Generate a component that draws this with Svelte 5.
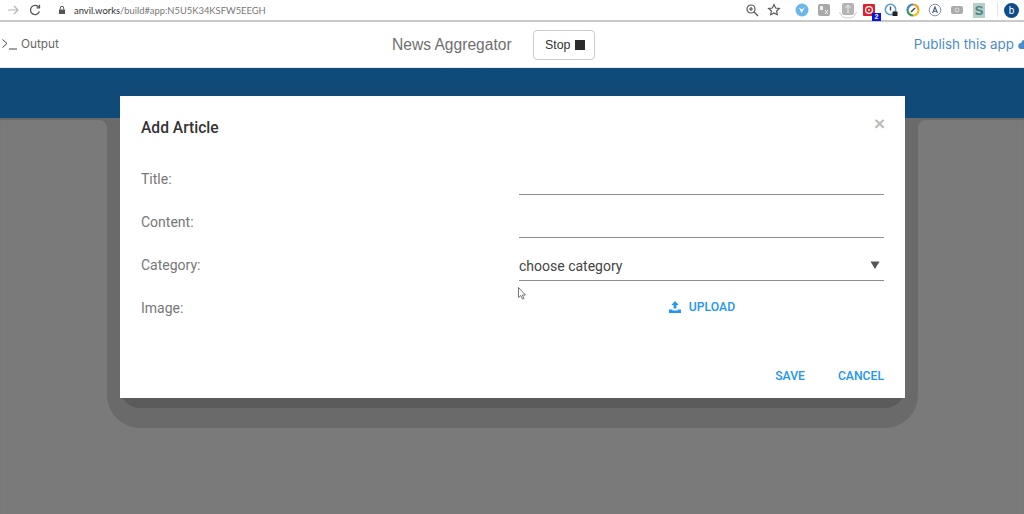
<script>
  const fields = ["Title:", "Content:"];
</script>

<div class="screen">
  <div class="chrome">
    <svg class="nav" width="14" height="14" viewBox="0 0 14 14" fill="none" stroke="#b4b4b4" stroke-width="1.2"><path d="M2 7h10M8 3l4 4-4 4" /></svg>
    <svg class="nav reload" width="14" height="14" viewBox="0 0 14 14" fill="none" stroke="#555" stroke-width="1.3"><path d="M11.4 8.6a4.6 4.6 0 1 1-.6-4.4" /><path d="M11.5 1.8v3h-3" /></svg>
    <svg class="lock" width="10" height="10" viewBox="0 0 10 10"><path d="M2 4.5h6v4.5H2z" fill="#555" /><path d="M3.3 4.5V3a1.7 1.7 0 0 1 3.4 0v1.5" fill="none" stroke="#555" /></svg>
    <span class="url"><b>anvil.works</b>/build#app:N5U5K34KSFW5EEGH</span>

    <div class="exts">
      <svg width="14" height="14" viewBox="0 0 14 14" fill="none" stroke="#555" stroke-width="1.2"><circle cx="6" cy="6" r="4" /><path d="M9 9l4 4M4 6h4M6 4v4" /></svg>
      <svg width="14" height="14" viewBox="0 0 14 14" fill="none" stroke="#555" stroke-width="1.1"><path d="M7 1.6l1.6 3.5 3.8.4-2.8 2.5.8 3.8L7 9.9l-3.4 1.9.8-3.8L1.6 5.5l3.8-.4z" /></svg>
      <svg class="first" width="14" height="14" viewBox="0 0 14 14"><circle cx="7" cy="7" r="6.5" fill="#6cb6ea" /><path d="M4 4.5l2.5 5.5 3.5-6-3 2.5z" fill="#fff" /></svg>
      <svg width="14" height="14" viewBox="0 0 14 14"><rect x="1" y="1" width="12" height="12" rx="2" fill="#a9a9a9" /><rect x="3" y="3" width="3" height="4" fill="#eee" /><path d="M8 7l3 4M11 7l-3 4" stroke="#eee" /></svg>
      <svg class="ring" width="20" height="20" viewBox="0 0 20 20"><path d="M1.5 12a9 9 0 0 0 17 0" fill="none" stroke="#ccc" /><rect x="4" y="3" width="12" height="12" rx="2" fill="#b5b5b5" /><path d="M10 5v8M7.5 8l2.5-3 2.5 3" stroke="#eee" fill="none" /></svg>
      <span class="badged">
        <svg width="14" height="14" viewBox="0 0 14 14"><rect x="1" y="1" width="12" height="12" rx="1" fill="#e0202a" /><circle cx="7" cy="7" r="3.4" fill="none" stroke="#fff" stroke-width="1.2" /><circle cx="7" cy="7" r="1" fill="#fff" /></svg>
        <span class="badge">2</span>
      </span>
      <svg width="14" height="14" viewBox="0 0 14 14"><circle cx="6.5" cy="6.5" r="5.2" fill="none" stroke="#5a9fd8" stroke-width="1.6" /><path d="M6.5 3.5v4" stroke="#444" stroke-width="1.4" /><rect x="8.5" y="8.5" width="5" height="4.5" fill="#222" /></svg>
      <svg width="14" height="14" viewBox="0 0 14 14" fill="none" stroke-width="2.2"><path d="M7 1.5a5.5 5.5 0 0 1 5.5 5.5" stroke="#e8a21c" /><path d="M12.5 7A5.5 5.5 0 0 1 7 12.5" stroke="#f2c21a" /><path d="M7 12.5A5.5 5.5 0 0 1 1.5 7" stroke="#3f9a53" /><path d="M1.5 7A5.5 5.5 0 0 1 7 1.5" stroke="#3d7fe0" /><path d="M5 9l4-4" stroke="#444" stroke-width="1.4" /></svg>
      <svg width="14" height="14" viewBox="0 0 14 14" fill="none"><circle cx="7" cy="7" r="5.8" stroke="#8a95a8" /><path d="M4.6 10L7 4l2.4 6M5.5 8.2h3" stroke="#4a5a78" stroke-width="1.1" /></svg>
      <svg width="14" height="14" viewBox="0 0 14 14"><rect x="1" y="3" width="12" height="8" rx="2" fill="#aaa" /><circle cx="7" cy="7" r="2" fill="none" stroke="#ddd" /></svg>
      <span class="s-ext">S</span>
      <i class="sep"></i>
      <span class="avatar">b</span>
    </div>
  </div>

  <div class="toolbar">
    <div class="output">
      <svg width="18" height="12" viewBox="0 0 18 12" fill="none" stroke="#444" stroke-width="1"><path d="M1.5 1.5l4.5 4-4.5 4M8 11h8" /></svg>
      <span>Output</span>
    </div>
    <div class="app-title">News Aggregator</div>
    <button class="stop">Stop <i></i></button>
    <div class="publish">
      <span>Publish this app</span>
      <svg width="14" height="12" viewBox="0 0 14 12"><path d="M3.5 11a3 3 0 0 1-.4-6A4.5 4.5 0 0 1 11.5 4.2 3.5 3.5 0 0 1 11 11z" fill="#4a8ccb" /></svg>
    </div>
  </div>

  <div class="run-area">
    <div class="band"></div>
    <div class="page">
      <div class="shade"></div>
    </div>
  </div>

  <div class="modal">
    <div class="modal-head">
      <h2>Add Article</h2>
      <span class="close">×</span>
    </div>

    <div class="form">
      {#each fields as label}
        <div class="label">{label}</div>
        <div class="input"></div>
      {/each}

      <div class="label">Category:</div>
      <div class="input select">
        <span>choose category</span>
        <svg width="10" height="8" viewBox="0 0 10 8"><path d="M0.5 0.5h9L5 8z" fill="#555" /></svg>
      </div>

      <div class="label">Image:</div>
      <div class="upload">
        <svg width="14" height="14" viewBox="0 0 14 14" fill="#2196f3"><path d="M7 1L3.4 5H5.6V8.4H8.4V5H10.6z" /><path d="M1 9.6h3.4v.9h5.2v-.9H13V13H1z" /></svg>
        <span>UPLOAD</span>
      </div>
    </div>

    <div class="actions">
      <span>SAVE</span>
      <span>CANCEL</span>
    </div>
  </div>

  <svg class="cursor" width="9" height="13" viewBox="0 0 9 13"><path d="M0.5 0.5v10l2.4-2 1.6 3.6 1.5-.7-1.6-3.4h3z" fill="#fff" stroke="#555" stroke-width="0.8" /></svg>
</div>

<style>
  :global(body) {
    margin: 0;
    background: #7a7a7a;
  }

  .screen {
    position: relative;
    width: 1024px;
    height: 514px;
    display: flex;
    flex-direction: column;
    overflow: hidden;
    font-family: Roboto, sans-serif;
  }

  .chrome {
    height: 20px;
    flex: none;
    display: flex;
    align-items: center;
    background: #fff;
    border-bottom: 2px solid #c9c9cc;
  }
  .nav {
    margin-left: 6px;
  }
  .reload {
    margin-left: 8px;
  }
  .lock {
    margin-left: 15px;
  }
  .url {
    margin-left: 7px;
    font: 9.4px Lato, sans-serif;
    color: #777;
    white-space: nowrap;
  }
  .url b {
    font-weight: 400;
    color: #333;
  }

  .exts {
    margin-left: auto;
    display: flex;
    align-items: center;
    gap: 8px;
    padding-right: 5px;
  }
  .exts .first {
    margin-left: 6px;
  }
  .exts .ring {
    margin: 0 -4px 0 -1px;
  }
  .badged {
    position: relative;
    display: flex;
  }
  .badge {
    position: absolute;
    right: -5px;
    bottom: -4px;
    width: 9px;
    height: 8px;
    background: #0a14e0;
    color: #fff;
    font: 700 7px/8px "Liberation Sans", sans-serif;
    text-align: center;
  }
  .s-ext {
    width: 12px;
    height: 15px;
    margin: 0 1px;
    background: #b4cfcc;
    color: #4f7f7c;
    font: 700 13px/15px "Liberation Sans", sans-serif;
    text-align: center;
  }
  .sep {
    width: 1px;
    height: 14px;
    background: #e4e4e4;
    margin-left: 3px;
  }
  .avatar {
    width: 15px;
    height: 15px;
    margin-left: -2px;
    border-radius: 50%;
    background: #0f4c8a;
    color: #fff;
    font: 10px/15px Roboto, sans-serif;
    text-align: center;
  }

  .toolbar {
    height: 45px;
    flex: none;
    display: grid;
    grid-template-columns: 392px 141px 62px 1fr;
    align-items: center;
    background: #fff;
    overflow: hidden;
    border-bottom: 1px solid #e6e8ea;
  }
  .output {
    display: flex;
    align-items: center;
    gap: 2px;
    padding: 0 0 2px 1px;
    font: 11.8px Inter, sans-serif;
    color: #666;
  }
  .app-title {
    font: 15.6px "Liberation Sans", sans-serif;
    color: #6f6f6f;
  }
  .stop {
    display: flex;
    align-items: center;
    gap: 4px;
    width: 62px;
    height: 30px;
    padding: 0 0 0 11px;
    border: 1px solid #ccc;
    border-radius: 4px;
    background: #fff;
    font: 12.4px "Liberation Sans", sans-serif;
    color: #333;
  }
  .stop i {
    flex: none;
    width: 10px;
    height: 10px;
    background: #2b2b2b;
  }
  .publish {
    justify-self: end;
    display: flex;
    align-items: center;
    gap: 4px;
    margin: 0 -8px 2px 0;
    font: 13.4px Inter, sans-serif;
    color: #4a8ccb;
    white-space: nowrap;
  }

  .run-area {
    flex: 1;
    display: flex;
    flex-direction: column;
    min-height: 0;
  }
  .band {
    height: 50px;
    flex: none;
    background: #104a78;
  }
  .page {
    flex: 1;
    position: relative;
    overflow: hidden;
    background: #7a7a7a;
    box-shadow: inset 0 2px 1px #686868;
  }
  .shade {
    position: absolute;
    left: 120px;
    right: 119px;
    top: -22px;
    height: 302px;
    box-shadow: 0 10px 0 0 #5b5b5b, 0 17px 0 13px #6a6a6a;
    border-radius: 0 0 20px 20px;
  }
  .shade::before,
  .shade::after {
    content: "";
    position: absolute;
    top: 24px;
    width: 8px;
    height: 8px;
  }
  .shade::before {
    left: -21px;
    background: radial-gradient(circle at 0 100%, transparent 7.5px, #6a6a6a 8.5px);
  }
  .shade::after {
    right: -21px;
    background: radial-gradient(circle at 100% 100%, transparent 7.5px, #6a6a6a 8.5px);
  }

  .modal {
    position: absolute;
    left: 120px;
    top: 96px;
    width: 785px;
    height: 302px;
    box-sizing: border-box;
    display: flex;
    flex-direction: column;
    padding: 0 21px;
    background: #fff;
  }
  .modal-head {
    height: 50px;
    flex: none;
    display: flex;
    align-items: center;
    justify-content: space-between;
    margin-top: 6px;
  }
  h2 {
    margin: 2px 0 0;
    font: 500 15.6px Roboto, sans-serif;
    color: #333;
  }
  .close {
    margin: -6px -1px 0 0;
    font: 700 19px "Liberation Sans", sans-serif;
    color: #bbb;
  }

  .form {
    display: grid;
    grid-template-columns: 1fr 365px;
    grid-auto-rows: 43px;
  }
  .label {
    align-self: end;
    padding-bottom: 8px;
    font-size: 14px;
    line-height: 16px;
    color: #777;
  }
  .input {
    border-bottom: 1px solid #8e8e8e;
  }
  .select {
    display: flex;
    align-items: flex-end;
    justify-content: space-between;
    padding-bottom: 6px;
    font-size: 14px;
    line-height: 16px;
    color: #444;
  }
  .select svg {
    margin: 0 4px 5px 0;
  }
  .upload {
    display: flex;
    align-items: center;
    justify-content: center;
    gap: 7px;
    padding-top: 9px;
    font-weight: 500;
    font-size: 12.2px;
    color: #2196f3;
  }
  .actions {
    display: flex;
    justify-content: flex-end;
    gap: 33px;
    margin-top: 45px;
    font-weight: 500;
    font-size: 12.2px;
    color: #2196f3;
  }

  .cursor {
    position: absolute;
    left: 518px;
    top: 287px;
  }
</style>
